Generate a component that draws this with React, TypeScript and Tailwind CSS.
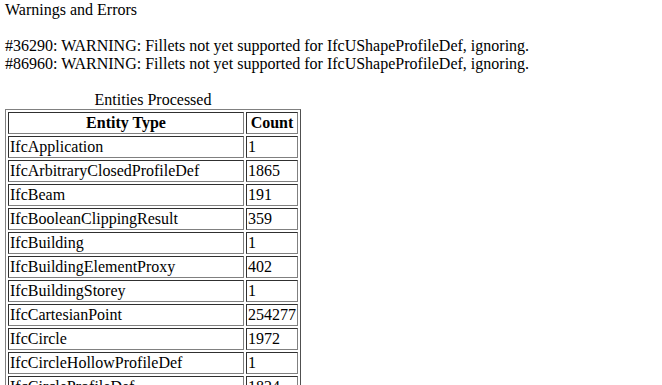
import React from 'react'

const warnings = [
  '#36290: WARNING: Fillets not yet supported for IfcUShapeProfileDef, ignoring.',
  '#86960: WARNING: Fillets not yet supported for IfcUShapeProfileDef, ignoring.',
]

const entities: [string, string][] = [
  ['IfcApplication', '1'],
  ['IfcArbitraryClosedProfileDef', '1865'],
  ['IfcBeam', '191'],
  ['IfcBooleanClippingResult', '359'],
  ['IfcBuilding', '1'],
  ['IfcBuildingElementProxy', '402'],
  ['IfcBuildingStorey', '1'],
  ['IfcCartesianPoint', '254277'],
  ['IfcCircle', '1972'],
  ['IfcCircleHollowProfileDef', '1'],
  ['IfcCircleProfileDef', '1824'],
]

const cell =
  'p-px border border-t-[#303030] border-l-[#303030] border-r-[#808080] border-b-[#808080] text-left align-middle'

export default function App() {
  return (
    <div className="min-h-[385px] bg-white text-black pt-px pl-[5px] font-['Liberation_Serif','Times_New_Roman',serif] text-[16px] leading-[18px]">
      <div>Warnings and Errors</div>
      <div className="h-[18px]" />
      {warnings.map((w) => (
        <div key={w}>{w}</div>
      ))}
      <div className="h-[18px]" />
      <table className="border-separate border-spacing-[2px] border border-t-[#808080] border-l-[#808080] border-r-[#505050] border-b-[#505050] w-[296px]">
        <caption className="text-center leading-[18px]">Entities Processed</caption>
        <thead>
          <tr>
            <th className={`${cell} w-[236px] !text-center font-bold`}>Entity Type</th>
            <th className={`${cell} !text-center font-bold`}>Count</th>
          </tr>
        </thead>
        <tbody>
          {entities.map(([name, count]) => (
            <tr key={name}>
              <td className={cell}>{name}</td>
              <td className={cell}>{count}</td>
            </tr>
          ))}
        </tbody>
      </table>
    </div>
  )
}
